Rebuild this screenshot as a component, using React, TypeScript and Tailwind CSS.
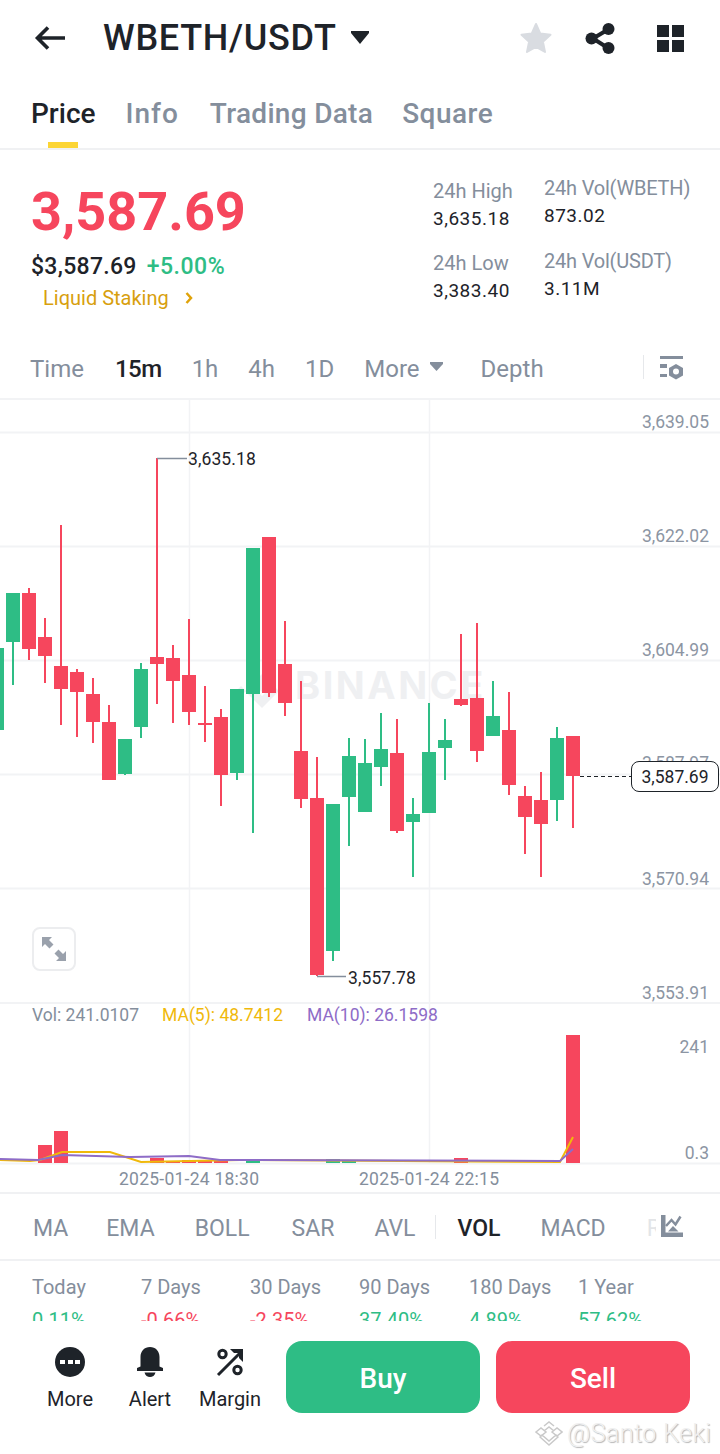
import React from "react";

const RED = "#F6465D";
const GREEN = "#2EBD85";

// x center, open/close box top+bottom, wick top+bottom
const candles: [number, "r" | "g", number, number, number, number][] = [
  [-3, "g", 648, 730, 620, 730],
  [13, "g", 593, 642, 593, 685],
  [29, "r", 593, 649, 588, 660],
  [45, "r", 637, 656, 618, 683],
  [61, "r", 666, 689, 525, 725],
  [77, "r", 672, 692, 669, 737],
  [93, "r", 694, 722, 678, 743],
  [109, "r", 722, 780, 705, 780],
  [125, "g", 739, 774, 739, 775],
  [141, "g", 669, 727, 663, 738],
  [157, "r", 657, 664, 458, 704],
  [173, "r", 658, 681, 645, 723],
  [189, "r", 675, 712, 619, 725],
  [205, "r", 723, 725, 686, 742],
  [221, "r", 717, 775, 709, 806],
  [237, "g", 689, 773, 689, 780],
  [253, "g", 548, 694, 548, 833],
  [269, "r", 537, 693, 537, 697],
  [285, "r", 664, 703, 621, 716],
  [301, "r", 751, 799, 681, 808],
  [317, "r", 798, 975, 757, 976],
  [333, "g", 804, 951, 804, 961],
  [349, "g", 756, 797, 738, 846],
  [365, "g", 763, 812, 739, 812],
  [381, "g", 749, 767, 713, 786],
  [397, "r", 753, 831, 719, 833],
  [413, "g", 814, 822, 798, 877],
  [429, "g", 752, 813, 703, 813],
  [445, "g", 740, 748, 719, 780],
  [461, "r", 699, 705, 634, 706],
  [477, "r", 698, 751, 623, 762],
  [493, "g", 716, 736, 681, 736],
  [509, "r", 730, 785, 692, 795],
  [525, "r", 796, 817, 786, 854],
  [541, "r", 800, 824, 772, 877],
  [557, "g", 738, 800, 727, 821],
  [573, "r", 736, 776, 736, 828],
];

// volume bars: x center, top, colour (bottom is always the axis)
const volumes: [number, number, string][] = [
  [45, 1145, RED],
  [61, 1131, RED],
  [157, 1158, RED],
  [173, 1161, RED],
  [189, 1160, RED],
  [205, 1161, RED],
  [221, 1160, RED],
  [253, 1161, GREEN],
  [333, 1159, GREEN],
  [349, 1161, GREEN],
  [461, 1158, RED],
  [573, 1035, RED],
];

function Chart() {
  return (
    <svg className="absolute inset-0" width="720" height="795" viewBox="0 398 720 795">
      <g stroke="#F2F3F5" fill="none">
        <path strokeWidth="2" d="M0 399H720M0 432.5H720M0 546.5H720M0 660.5H720M0 774.5H720M0 888.5H720M0 1003H720M0 1163.5H720" />
        <path strokeWidth="1.5" d="M189.5 398V1163M429.5 398V1163" />
      </g>
      {/* BINANCE watermark mark */}
      <path d="M262 674l9 9-9 9-9-9zM245 691l6-6 11 11 11-11 6 6-17 17zM236 691l5-5 5 5-5 5z" fill="#EFF0F2" />
      <text x="295" y="699" fontFamily="Inter, sans-serif" fontWeight="700" fontSize="38" letterSpacing="2.5" fill="#EFF0F2">BINANCE</text>
      {candles.map(([x, c, t, b, wt, wb]) => {
        const col = c === "r" ? RED : GREEN;
        return (
          <g key={x} fill={col}>
            <rect x={x - 1} y={wt} width="2" height={wb - wt} />
            <rect x={x - 7} y={t} width="14" height={b - t} />
          </g>
        );
      })}
      <path d="M157 458.5H187M317 976.5H346" stroke="#848E9C" strokeWidth="1.5" fill="none" />
      <path d="M580 776.5H632" stroke="#1E2329" strokeWidth="1" strokeDasharray="4 3" fill="none" />
      {volumes.map(([x, t, col]) => (
        <rect key={x} x={x - 7} y={t} width="14" height={1163 - t} fill={col} />
      ))}
      <path d="M0 1160L30 1161L40 1160L62 1152L110 1152L141 1162L240 1160L560 1162L573 1137" stroke="#F0B90B" strokeWidth="2" fill="none" />
      <path d="M0 1159L38 1160L62 1155L130 1157L189 1156L220 1160L560 1161L573 1149" stroke="#8E6CC7" strokeWidth="2" fill="none" />
    </svg>
  );
}

function AxisLabel({ y, children }: { y: string; children: React.ReactNode }) {
  return <span className={`absolute right-[11px] text-[17.5px] leading-[20px] text-[#8C95A3] ${y}`}>{children}</span>;
}

export default function App() {
  return (
    <div className="relative w-[720px] h-[1454px] overflow-hidden bg-white font-['Roboto',sans-serif] text-[#1E2329]">
      {/* top bar */}
      <div className="flex h-[76px] items-center pl-[34px] pr-[36px]">
        <svg width="32" height="26" viewBox="0 0 32 26" fill="none" stroke="#1E2329" strokeWidth="3.6">
          <path d="M31 13H4M14 2.5L3.5 13 14 23.5" />
        </svg>
        <span className="ml-[37px] text-[36px] font-medium tracking-[0.7px]">WBETH/USDT</span>
        <svg className="ml-[13px] mb-[3px]" width="20" height="14" viewBox="0 0 20 14" fill="#1E2329">
          <path d="M1 1h18v2L10 14 1 3z" />
        </svg>
        <svg className="ml-auto" width="32" height="32" viewBox="0 0 32 32" fill="#D9DCE1" stroke="#D9DCE1" strokeWidth="2" strokeLinejoin="round">
          <path d="M16 2l4.300 9.600 10.200 1.200-7.600 7 2.100 10.200L16 25l-9 5 2.100-10.200-7.600-7 10.200-1.200z" />
        </svg>
        <svg className="ml-[33px]" width="30" height="31" viewBox="0 0 30 31" fill="#1E2329">
          <path d="M8 15.500L23 6.500M8 15.500L23 25" stroke="#1E2329" strokeWidth="4" />
          <circle cx="6.500" cy="15.500" r="6" />
          <circle cx="23.500" cy="6" r="6" />
          <circle cx="23.500" cy="25" r="6" />
        </svg>
        <div className="ml-[42px] grid grid-cols-2 gap-[3px] w-[27px] h-[27px]">
          <div className="bg-[#1E2329]" />
          <div className="bg-[#1E2329]" />
          <div className="bg-[#1E2329]" />
          <div className="bg-[#1E2329]" />
        </div>
      </div>

      {/* tabs */}
      <div className="relative flex h-[74px] items-start border-b-2 border-[#F0F1F3] pl-[31px] pt-[18px] text-[28px] leading-[40px] font-medium text-[#848E9C]">
        <span className="text-[#1E2329]">Price</span>
        <span className="ml-[30px] tracking-[1px]">Info</span>
        <span className="ml-[31px] tracking-[0.3px]">Trading Data</span>
        <span className="ml-[29px] tracking-[0.5px]">Square</span>
        <div className="absolute left-[48px] bottom-0 h-[6px] w-[30px] bg-[#FCD535]" />
      </div>

      {/* price summary */}
      <div className="flex h-[198px] pl-[31px]">
        <div className="w-[402px] pt-[30px]">
          <div className="text-[54px] leading-[64px] font-bold text-[#F6465D]">3,587.69</div>
          <div className="mt-[8px] flex text-[23px] leading-[30px] font-medium tracking-[0.3px]">
            <span>$3,587.69</span>
            <span className="ml-[10px] tracking-[0.5px] text-[#2EBD85]">+5.00%</span>
          </div>
          <div className="mt-[2px] ml-[12px] flex items-center text-[20px] leading-[28px] text-[#D89F0E]">
            <span>Liquid Staking</span>
            <svg className="ml-[16px]" width="8" height="12" viewBox="0 0 8 12" fill="none" stroke="#E0A30A" strokeWidth="2.500">
              <path d="M1.500 1L6 6l-4.500 5" />
            </svg>
          </div>
        </div>
        <div className="w-[111px] pt-[27px]">
          <div className="text-[20px] leading-[28px] text-[#848E9C]">24h High</div>
          <div className="text-[19px] leading-[28px] tracking-[0.5px]">3,635.18</div>
          <div className="mt-[16px] text-[20px] leading-[28px] text-[#848E9C]">24h Low</div>
          <div className="text-[19px] leading-[28px] tracking-[0.5px]">3,383.40</div>
        </div>
        <div className="pt-[24px]">
          <div className="text-[20px] leading-[28px] whitespace-nowrap tracking-[-0.2px] text-[#848E9C]">24h Vol(WBETH)</div>
          <div className="text-[19px] leading-[28px] tracking-[0.5px]">873.02</div>
          <div className="mt-[17px] text-[20px] leading-[28px] whitespace-nowrap tracking-[-0.2px] text-[#848E9C]">24h Vol(USDT)</div>
          <div className="text-[19px] leading-[28px] tracking-[0.5px]">3.11M</div>
        </div>
      </div>

      {/* time frames */}
      <div className="relative flex h-[50px] items-center pb-[8px] pl-[30px] text-[24px] text-[#848E9C]">
        <span>Time</span>
        <span className="ml-[31px] font-medium tracking-[-0.5px] text-[#1E2329]">15m</span>
        <span className="ml-[30px]">1h</span>
        <span className="ml-[30px]">4h</span>
        <span className="ml-[30px]">1D</span>
        <span className="ml-[30px]">More</span>
        <svg className="ml-[10px] mb-[5px]" width="13" height="9" viewBox="0 0 13 9" fill="#848E9C">
          <path d="M0 0h13v2L6.500 9 0 2z" />
        </svg>
        <span className="ml-[38px]">Depth</span>
        <div className="absolute left-[643px] top-[7px] h-[24px] w-px bg-[#E6E8EB]" />
        <svg className="absolute left-[660px] top-[8px]" width="24" height="24" viewBox="0 0 24 24" fill="#848E9C">
          <path d="M0 0h23v3H0zM0 8h7v4H0zM0 18h7v3H0z" />
          <path fillRule="evenodd" d="M16 8l7 4v7.500L16 23.500l-7-4V12zM16 12.500a3 3 0 100 6 3 3 0 000-6z" />
        </svg>
      </div>

      {/* chart */}
      <div className="relative h-[796px] border-b-2 border-[#F0F1F3]">
        <Chart />
        <AxisLabel y="top-[14px]">3,639.05</AxisLabel>
        <AxisLabel y="top-[128px]">3,622.02</AxisLabel>
        <AxisLabel y="top-[242px]">3,604.99</AxisLabel>
        <AxisLabel y="top-[355px]">3,587.97</AxisLabel>
        <AxisLabel y="top-[471px]">3,570.94</AxisLabel>
        <AxisLabel y="top-[585px]">3,553.91</AxisLabel>
        <span className="absolute left-[188px] top-[51px] text-[17.5px] leading-[20px] tracking-[0.1px]">3,635.18</span>
        <span className="absolute left-[348px] top-[570px] text-[17.5px] leading-[20px] tracking-[0.1px]">3,557.78</span>
        <span className="absolute left-[631px] top-[363px] flex h-[31px] w-[88px] items-center justify-center rounded-[8px] border border-[#1E2329] bg-white pt-[2px] text-[17.5px]">3,587.69</span>
        <div className="absolute left-[32px] top-[529px] flex h-[44px] w-[44px] items-center justify-center rounded-[8px] border-2 border-[#ECEDEF] bg-white">
          <svg width="26" height="26" viewBox="0 0 26 26" fill="#9AA1AC">
            <path d="M1 1h10L8 4l4.500 4.500-4 4L4 8l-3 3zM25 25H15l3-3-4.500-4.500 4-4L22 18l3-3z" />
          </svg>
        </div>
        <div className="absolute left-[32px] top-[606px] flex text-[17.5px] leading-[22px]">
          <span className="text-[#848E9C]">Vol: 241.0107</span>
          <span className="ml-[23px] text-[#F0B90B]">MA(5): 48.7412</span>
          <span className="ml-[24px] text-[#8E6CC7]">MA(10): 26.1598</span>
        </div>
        <AxisLabel y="top-[639px]">241</AxisLabel>
        <AxisLabel y="top-[745px]">0.3</AxisLabel>
        <span className="absolute left-[119px] top-[770px] text-[17.5px] leading-[22px] tracking-[0.25px] text-[#848E9C]">2025-01-24 18:30</span>
        <span className="absolute left-[359px] top-[770px] text-[17.5px] leading-[22px] tracking-[0.25px] text-[#848E9C]">2025-01-24 22:15</span>
      </div>

      {/* indicator tabs */}
      <div className="relative flex h-[67px] items-center overflow-hidden border-b-2 border-[#F0F1F3] pl-[33px] pt-[6px] text-[23px] text-[#848E9C]">
        <span>MA</span>
        <span className="ml-[38px]">EMA</span>
        <span className="ml-[40px]">BOLL</span>
        <span className="ml-[42px]">SAR</span>
        <span className="ml-[40px]">AVL</span>
        <div className="ml-[19px] mb-[6px] h-[24px] w-px bg-[#E6E8EB]" />
        <span className="ml-[22px] font-medium text-[#1E2329]">VOL</span>
        <span className="ml-[40px]">MACD</span>
        <span className="ml-[41px] text-[#E3E5E8]">R</span>
        <div className="absolute right-0 top-0 flex h-full w-[64px] items-center bg-white pb-[2px] pl-[5px]">
          <svg width="22" height="22" viewBox="0 0 22 22" fill="#848E9C">
            <path d="M0 0h4.500v17.500H22V22H0z" />
            <path d="M5 11l5.500-6 4 4.500 5-8" fill="none" stroke="#848E9C" strokeWidth="2.500" />
            <path d="M7 16.500l5-5.500 5.500 5.500z" />
          </svg>
        </div>
      </div>

      {/* period returns */}
      <div className="grid h-[60px] grid-cols-[109px_109px_109px_110px_109px_109px] overflow-hidden pl-[32px] pt-[12px] text-[20px] leading-[28px] text-[#848E9C]">
        {[
          ["Today", "0.11%", "#2EBD85"],
          ["7 Days", "-0.66%", "#F6465D"],
          ["30 Days", "-2.35%", "#F6465D"],
          ["90 Days", "37.40%", "#2EBD85"],
          ["180 Days", "4.89%", "#2EBD85"],
          ["1 Year", "57.62%", "#2EBD85"],
        ].map(([label, val, col]) => (
          <div key={label}>
            <div>{label}</div>
            <div className="mt-[5px]" style={{ color: col }}>{val}</div>
          </div>
        ))}
      </div>

      {/* bottom actions */}
      <div className="flex pt-[20px] pl-[30px]">
        <div className="flex w-[80px] flex-col items-center pt-[6px] text-[20px] leading-[24px]">
          <div className="flex h-[30px] w-[30px] items-center justify-center gap-[2.5px] rounded-full bg-[#1E2329]">
            <div className="h-[4px] w-[5px] bg-white" />
            <div className="h-[4px] w-[5px] bg-white" />
            <div className="h-[4px] w-[5px] bg-white" />
          </div>
          <span className="mt-[10px]">More</span>
        </div>
        <div className="flex w-[80px] flex-col items-center pt-[6px] text-[20px] leading-[24px]">
          <svg width="28" height="30" viewBox="0 0 28 30" fill="#1E2329">
            <path d="M14 0c5.500 0 9.500 4 9.500 10v9.500L27 21v3H1v-3l3.500-1.500V10C4.500 4 8.500 0 14 0zM8.500 25.500h11C18.800 28.500 16.500 30 14 30s-4.800-1.500-5.500-4.500z" />
          </svg>
          <span className="mt-[10px]">Alert</span>
        </div>
        <div className="flex w-[80px] flex-col items-center pt-[6px] text-[20px] leading-[24px]">
          <svg width="28" height="30" viewBox="0 0 28 30" fill="none" stroke="#1E2329" strokeWidth="3">
            <path d="M2 28L25 5" />
            <path d="M14 2h13v13l-4-4V6h-5z" fill="#1E2329" stroke="none" />
            <circle cx="6.500" cy="7" r="3.700" />
            <circle cx="21.500" cy="23" r="3.700" />
          </svg>
          <span className="mt-[10px]">Margin</span>
        </div>
        <div className="ml-[16px] flex h-[72px] w-[194px] items-center justify-center rounded-[16px] bg-[#2EBD85] pt-[4px] text-[28px] font-medium text-white">Buy</div>
        <div className="ml-[16px] flex h-[72px] w-[194px] items-center justify-center rounded-[16px] bg-[#F6465D] pt-[4px] text-[28px] font-medium text-white">Sell</div>
      </div>

      {/* source watermark */}
      <div className="absolute left-[535px] top-[1419px] flex items-center text-[25.5px] leading-[28px] font-light tracking-[0.2px] text-[#F0F0F0] [text-shadow:1px_1px_1px_#B5B5B5]">
        <svg width="28" height="27" viewBox="0 0 28 27" fill="none" stroke="#C9C9C9" strokeWidth="1.500">
          <path d="M9 6l5-4 5 4M9 11l5-4 5 4M1 12l5-4 5 4-5 4zM17 12l5-4 5 4-5 4zM14 25L5 17l2-2 7 6 7-6 2 2z" />
        </svg>
        <span className="ml-[4px]">@Santo Keki</span>
      </div>
    </div>
  );
}
